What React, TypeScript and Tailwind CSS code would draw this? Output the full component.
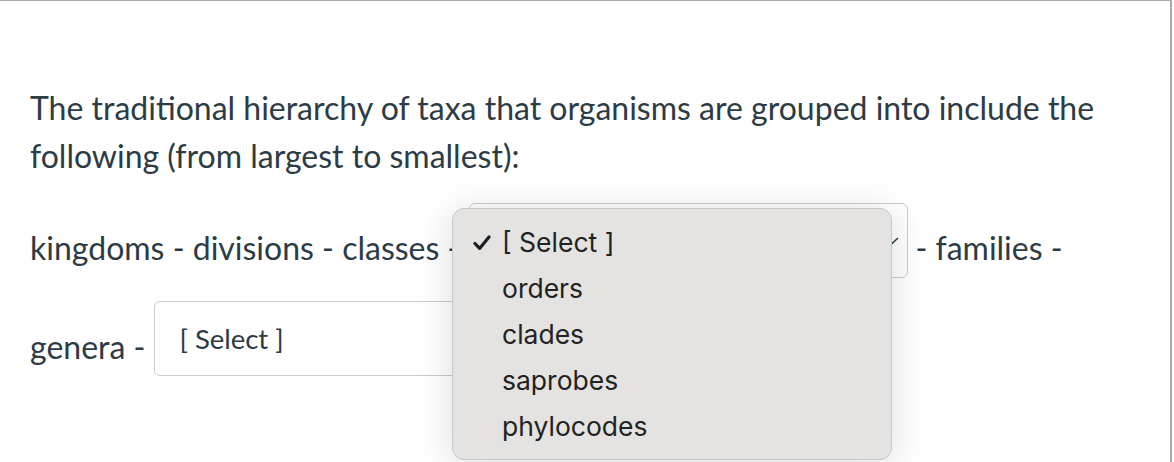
import React from 'react';

const options = ['[ Select ]', 'orders', 'clades', 'saprobes', 'phylocodes'];

const Chevron: React.FC = () => (
  <svg width="18" height="12" viewBox="0 0 18 12" className="absolute right-[7px] top-1/2 -translate-y-1/2">
    <path d="M2 3 L9 9.5 L16 3" fill="none" stroke="#2d3b45" strokeWidth="1.6" />
  </svg>
);

const SelectBox: React.FC<{ label?: string; className?: string }> = ({ label, className = '' }) => (
  <div
    className={`relative h-[75px] w-[439px] shrink-0 rounded-[6px] border border-[#c7cdd1] bg-white flex items-center pl-[24px] ${className}`}
  >
    {label && <span className="text-[27.5px] text-[#2d3b45]">{label}</span>}
    <Chevron />
  </div>
);

export default function App() {
  return (
    <div
      className="relative h-[462px] w-[1172px] overflow-hidden border-t border-r-2 border-[#a9a9a9] bg-white text-[#2d3b45]"
      style={{ fontFamily: 'Lato, "Open Sans", sans-serif' }}
    >
      <div className="pl-[30px] pt-[83px]">
        <p className="text-[32px] leading-[48px]">
          The traditional hierarchy of taxa that organisms are grouped into include the
          <br />
          following (from largest to smallest):
        </p>

        <div className="mt-[23px] flex items-center">
          <span className="mt-[14px] text-[32px] whitespace-nowrap">kingdoms - divisions - classes -</span>
          <SelectBox className="ml-[10px]" />
          <span className="mt-[14px] ml-[7px] text-[32px] whitespace-nowrap">- families -</span>
        </div>

        <div className="mt-[23px] flex items-center">
          <span className="mt-[16px] text-[32px] whitespace-nowrap">genera -</span>
          <SelectBox label="[ Select ]" className="ml-[9px]" />
        </div>
      </div>

      {/* open native dropdown menu */}
      <div
        className="absolute left-[452px] top-[207px] h-[252px] w-[440px] rounded-[12px] border border-[#c9c8c6] bg-[#e4e3e1] pt-[11px] shadow-[0_4px_40px_rgba(0,0,0,0.14)]"
        style={{ fontFamily: 'Inter, "Noto Sans", sans-serif' }}
      >
        {options.map((opt, i) => (
          <div key={opt} className="relative flex h-[46px] items-center pl-[49px] text-[26.5px] text-[#222222]">
            {i === 0 && (
              <svg width="18" height="16" viewBox="0 0 18 16" className="absolute left-[20px] top-1/2 -translate-y-1/2">
                <path d="M2 8.5 L6.6 13.4 L16 2" fill="none" stroke="#1f1f1f" strokeWidth="3.2" strokeLinecap="round" strokeLinejoin="round" />
              </svg>
            )}
            {opt}
          </div>
        ))}
      </div>
    </div>
  );
}
